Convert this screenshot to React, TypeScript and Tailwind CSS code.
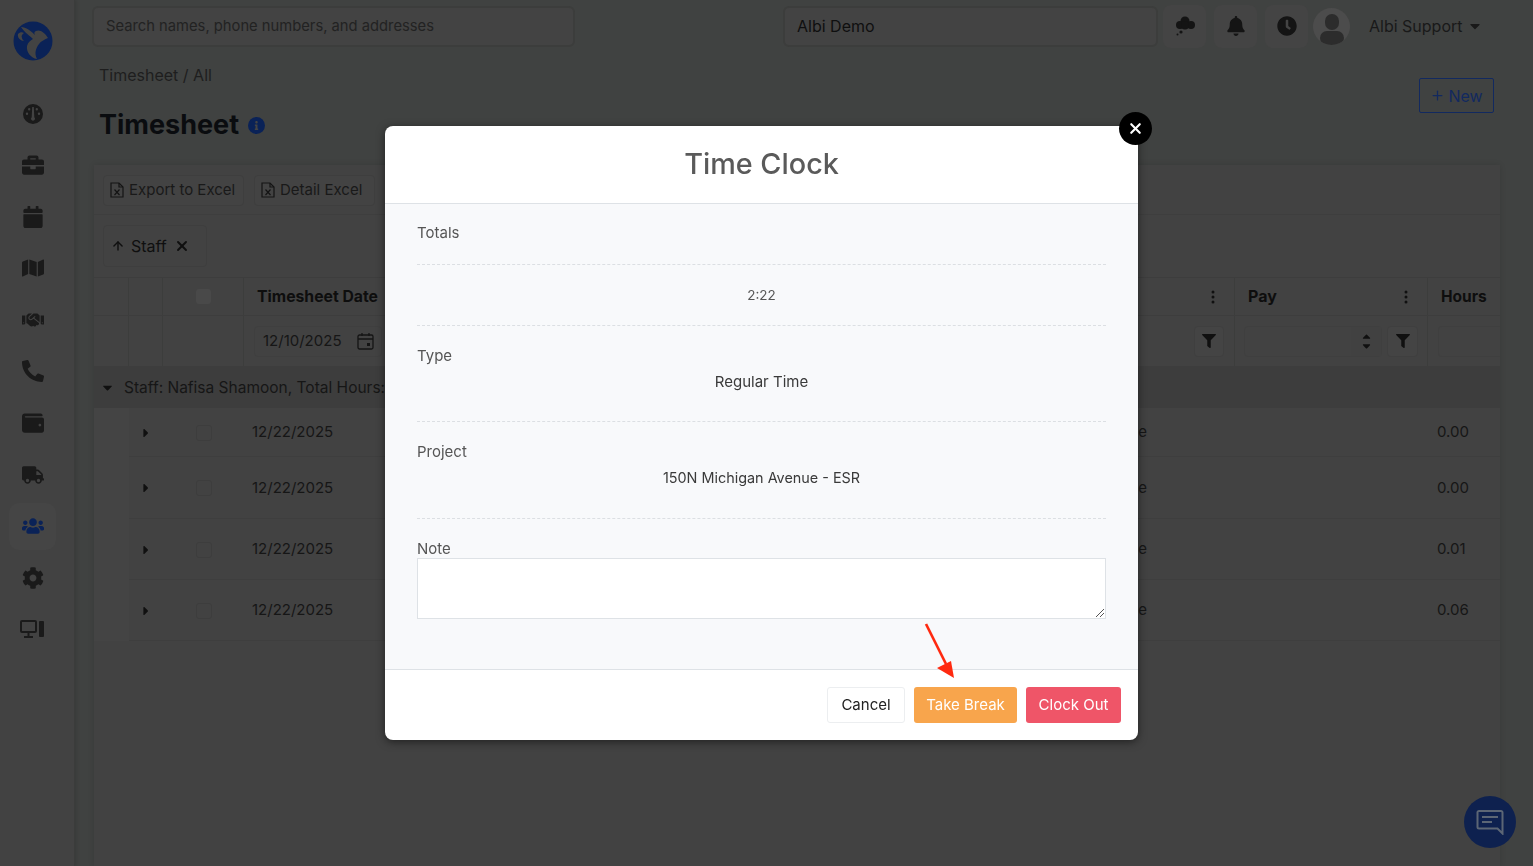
import React from 'react';
import { FaBriefcase, FaCalendar, FaMap, FaHandshake, FaPhoneAlt, FaWallet, FaTruck, FaUsers, FaCog, FaBell, FaClock, FaFilter, FaCaretDown, FaCaretRight, FaSortUp, FaSortDown, FaInfo } from 'react-icons/fa';
import { X, Plus, ArrowUp } from 'lucide-react';

const GaugeIcon = ({ size }: { size: number }) => (
  <svg width={size} height={size} viewBox="0 0 22 22" fill="#1a1a1a">
    <path fillRule="evenodd" d="M11 1a10 10 0 1 0 0 20 10 10 0 0 0 0-20zM5 9.5a1.2 1.2 0 1 1 0 2.4 1.2 1.2 0 0 1 0-2.4zm12 0a1.2 1.2 0 1 1 0 2.4 1.2 1.2 0 0 1 0-2.4zM7.2 5a1.2 1.2 0 1 1 0 2.4 1.2 1.2 0 0 1 0-2.4zm7.6 0a1.2 1.2 0 1 1 0 2.4 1.2 1.2 0 0 1 0-2.4zM10.2 4h1.6l.5 10.2a2 2 0 1 1-2.6 0z" />
  </svg>
);

const navIcons = [GaugeIcon, FaBriefcase, FaCalendar, FaMap, FaHandshake, FaPhoneAlt, FaWallet, FaTruck, FaUsers, FaCog];

const rows = [
  { hours: '0.00', height: 'h-[49px]' },
  { hours: '0.00', height: 'h-[62px]' },
  { hours: '0.01', height: 'h-[61px]' },
  { hours: '0.06', height: 'h-[61px]' },
];

const ExcelIcon = () => (
  <svg width="14" height="16" viewBox="0 0 14 16" fill="none" stroke="#141414" strokeWidth="1.2" className="shrink-0">
    <path d="M1 1h8l4 4v10H1z" />
    <path d="M9 1v4h4" />
    <path d="M4.5 7.5l5 5.5M9.5 7.5l-5 5.5" />
  </svg>
);

const CalendarIcon = () => (
  <svg width="17" height="18" viewBox="0 0 17 18" fill="none" stroke="#141414" strokeWidth="1.3">
    <rect x="1" y="3" width="15" height="14" rx="1.5" />
    <path d="M1 7h15M5 1v3M12 1v3" />
    <rect x="10" y="11" width="3" height="3" fill="#141414" stroke="none" />
  </svg>
);

const Kebab = () => (
  <svg width="4" height="14" viewBox="0 0 4 14" fill="#101010">
    <circle cx="2" cy="2" r="1.5" />
    <circle cx="2" cy="7" r="1.5" />
    <circle cx="2" cy="12" r="1.5" />
  </svg>
);

const Logo = () => (
  <svg width="40" height="40" viewBox="0 0 40 40">
    <circle cx="20" cy="20" r="19.5" fill="#0a2257" />
    <path d="M23 10C27 8 32 12 35 17 31 19 28 20 26 23 23 27 21 32 24 38 18 37 13 31 14 25 15 21 18 19 20 18 17 15 11 11 8 6 13 6 18 10 22 14 21 12 21 11 23 10z" fill="#434343" />
    <path d="M5 13c2-2 4-2 6-1-2 1-3 3-2 5 0 1 1 2 2 3-3 0-7-3-6-7z" fill="#434343" />
  </svg>
);

const ThoughtIcon = () => (
  <svg width="22" height="22" viewBox="0 0 22 22" fill="#141414">
    <circle cx="11" cy="6" r="4.5" />
    <circle cx="6" cy="10" r="4" />
    <circle cx="17" cy="10" r="4" />
    <circle cx="11" cy="10.5" r="4" />
    <circle cx="7" cy="17" r="1.6" />
    <circle cx="3.5" cy="19.5" r="1" />
  </svg>
);

const Sidebar = () => (
  <aside className="w-[75px] shrink-0 bg-[#424242] border-r border-[#3b3c3b] shadow-[1px_0_4px_rgba(0,0,0,0.15)] pl-[9px]">
    <div className="ml-[4px] mt-[21px] mb-[29px] h-[40px]">
      <Logo />
    </div>
    <nav className="flex flex-col gap-[4.6px]">
      {navIcons.map((Icon, i) => (
        <div
          key={i}
          className={`w-[47px] h-[47px] rounded-[10px] flex items-center justify-center ${i === 8 ? 'bg-[#454545] text-[#0a2257]' : 'text-[#1a1a1a]'}`}
        >
          <Icon size={22} />
        </div>
      ))}
      <div className="w-[47px] h-[47px] flex items-center justify-center">
        <svg width="25" height="19" viewBox="0 0 25 19" fill="none" stroke="#1a1a1a" strokeWidth="2">
          <rect x="1" y="1" width="15" height="11" rx="1" />
          <path d="M8.5 12v4M4 17h9" />
          <rect x="19" y="1" width="5" height="16" rx="1" fill="#1a1a1a" stroke="none" />
        </svg>
      </div>
    </nav>
  </aside>
);

const TopBar = () => (
  <header className="h-[52px] flex items-center">
    <div className="w-[483px] h-[41px] ml-[17px] rounded-[6px] border-2 border-[#3c3d3c] bg-[#434343] flex items-center px-[12px] text-[14.75px] text-[#222222]">
      Search names, phone numbers, and addresses
    </div>
    <div className="w-[375px] h-[41px] ml-[208px] rounded-[6px] border-2 border-[#3c3d3c] bg-[#434343] flex items-center px-[12px] text-[16px] text-[#0f0f0f]">
      Albi Demo
    </div>
    <div className="flex items-center gap-[8px] ml-[5px]">
      <div className="w-[43px] h-[43px] rounded-[8px] bg-[#444444] flex items-center justify-center"><ThoughtIcon /></div>
      <div className="w-[43px] h-[43px] rounded-[8px] bg-[#444444] flex items-center justify-center text-[#141414]"><FaBell size={20} /></div>
      <div className="w-[43px] h-[43px] rounded-[8px] bg-[#444444] flex items-center justify-center text-[#141414]"><FaClock size={20} /></div>
    </div>
    <div className="w-[37px] h-[37px] ml-[5px] rounded-full bg-[#4c4c4c] overflow-hidden flex flex-col items-center">
      <span className="w-[14px] h-[16px] mt-[6px] rounded-full bg-[#2c2c2c]" />
      <span className="w-[24px] h-[14px] mt-[1px] rounded-full bg-[#2c2c2c]" />
    </div>
    <span className="ml-[19px] text-[16px] text-[#191919]">Albi Support</span>
    <FaCaretDown size={16} className="ml-[4px] text-[#191919]" />
  </header>
);

const Th = ({ className = '', children }: { className?: string; children?: React.ReactNode }) => (
  <div className={`border-r border-[#3c3d3c] flex items-center ${className}`}>{children}</div>
);

const DataTable = () => (
  <div className="text-[#161616]">
    <div className="flex h-[39px] border-y border-[#3d3d3d]">
      <Th className="w-[35px]" />
      <Th className="w-[34px]" />
      <Th className="w-[81px] justify-center">
        <span className="w-[15px] h-[15px] rounded-[3px] bg-[#494949]" />
      </Th>
      <Th className="flex-1 pl-[13px] pr-[19px] justify-between">
        <span className="text-[15.75px] font-bold text-[#0e0e0e]">Timesheet Date</span>
        <Kebab />
      </Th>
      <Th className="w-[193px] pl-[13px] pr-[19px] justify-between">
        <span className="text-[16px] font-bold text-[#0e0e0e] -mt-[2px]">Pay</span>
        <Kebab />
      </Th>
      <Th className="w-[72px] pl-[13px] border-r-0">
        <span className="text-[15.5px] font-bold text-[#0e0e0e]">Hours</span>
      </Th>
    </div>
    <div className="flex h-[51px] border-b border-[#3d3d3d]">
      <Th className="w-[35px]" />
      <Th className="w-[34px]" />
      <Th className="w-[81px]" />
      <Th className="flex-1 pl-[10px] pr-[10px] justify-between">
        <div className="flex items-center h-[31px] w-[128px] rounded-[4px] border border-[#3f3f3f] pl-[8px] text-[15px]">
          12/10/2025
          <span className="ml-auto mr-[7px]"><CalendarIcon /></span>
        </div>
        <div className="w-[30px] h-[31px] rounded-[4px] bg-[#444444] border border-[#3f3f3f] flex items-center justify-center text-[#101010]">
          <FaFilter size={14} />
        </div>
      </Th>
      <Th className="w-[193px] pl-[9px] pr-[9px] gap-[5px]">
        <div className="flex-1 h-[31px] rounded-[4px] border border-[#3f3f3f] flex justify-end">
          <span className="w-[30px] h-full flex flex-col items-center justify-center bg-[#414141] text-[#101010]">
            <FaSortUp size={13} className="-mb-[8px]" />
            <FaSortDown size={13} className="-mt-[1px]" />
          </span>
        </div>
        <div className="w-[31px] h-[31px] rounded-[4px] bg-[#444444] border border-[#3f3f3f] flex items-center justify-center text-[#101010]">
          <FaFilter size={14} />
        </div>
      </Th>
      <Th className="w-[72px] pl-[10px] border-r-0">
        <div className="flex-1 h-[31px] rounded-l-[4px] border-y border-l border-[#3f3f3f]" />
      </Th>
    </div>
    <div className="h-[41px] bg-[#3d3d3d] flex items-center text-[15.5px] pl-[6px]">
      <FaCaretDown size={15} className="text-[#101010]" />
      <span className="ml-[9px] whitespace-nowrap">Staff: Nafisa Shamoon, Total Hours: 2:22</span>
    </div>
    <div className="flex">
      <div className="w-[35px] shrink-0 bg-[#444444]" />
      <div className="flex-1">
        {rows.map((row, i) => (
          <div key={i} className={`flex items-center ${row.height} pt-[1px] bg-[#424242] border-b border-[#3e3e3e] text-[15px]`}>
            <div className="w-[34px] flex justify-center text-[#101010]"><FaCaretRight size={14} /></div>
            <div className="w-[81px] flex justify-center">
              <span className="w-[16px] h-[16px] rounded-[3px] border border-[#3d3d3d]" />
            </div>
            <div className="flex-1 pl-[8px]">12/22/2025</div>
            <div className="whitespace-nowrap">Regular Time</div>
            <div className="w-[88px]" />
            <div className="w-[193px]" />
            <div className="w-[72px] pl-[9px]">{row.hours}</div>
          </div>
        ))}
      </div>
    </div>
  </div>
);

const FormValue = ({ children, className = '' }: { children: React.ReactNode; className?: string }) => (
  <div className={`text-center text-[15px] text-[#3a3a3a] ${className}`}>{children}</div>
);

const TimeClockModal = () => (
  <div className="fixed inset-0 z-10 flex justify-center pt-[126px] pr-[10px]">
    <div className="relative w-[753px] h-[614px] rounded-[8px] bg-white shadow-[0_2px_8px_rgba(0,0,0,0.5)] flex flex-col">
      <button className="absolute -right-[14px] -top-[14px] w-[33px] h-[33px] rounded-full bg-black flex items-center justify-center">
        <X size={17} strokeWidth={3} className="text-white" />
      </button>
      <div className="h-[78px] shrink-0 pb-[2px] border-b border-[#dee2e6] flex items-center justify-center rounded-t-[8px]">
        <h2 className="text-[28.8px] font-medium text-[#5a5a5a]">Time Clock</h2>
      </div>
      <div className="flex-1 bg-[#f8f9fb] px-[32px]">
        <div className="h-[61px] pt-[18px] border-b border-dashed border-[#dcdfe3] text-[15px] text-[#555555]">Totals</div>
        <div className="h-[61px] flex items-center justify-center border-b border-dashed border-[#dcdfe3]">
          <FormValue className="!text-[#555555] !text-[13.5px]">2:22</FormValue>
        </div>
        <div className="h-[96px] pt-[19px] border-b border-dashed border-[#dcdfe3] text-[15px] text-[#555555]">
          Type
          <FormValue className="mt-[3px]">Regular Time</FormValue>
        </div>
        <div className="h-[97px] pt-[19px] border-b border-dashed border-[#dcdfe3] text-[15px] text-[#555555]">
          Project
          <FormValue className="mt-[3px] !text-[14.4px]">150N Michigan Avenue - ESR</FormValue>
        </div>
        <div className="pt-[19px] text-[15px] text-[#555555] leading-[22px]">
          Note
          <div className="relative h-[61px] -mt-[2px] border border-[#dee2e6] bg-white">
            <svg width="9" height="9" viewBox="0 0 9 9" stroke="#555" strokeWidth="1" className="absolute right-[1px] bottom-[1px]">
              <path d="M1 9l8-8M5 9l4-4" />
            </svg>
          </div>
        </div>
      </div>
      <div className="h-[71px] shrink-0 border-t border-[#dee2e6] flex items-center justify-end gap-[9px] pr-[17px] rounded-b-[8px]">
        <button className="w-[78px] h-[36px] rounded-[3px] border border-[#eceef0] text-[15px] text-[#222222]">Cancel</button>
        <button className="w-[103px] h-[36px] rounded-[3px] bg-[#f8a54c] text-[15px] text-white">Take Break</button>
        <button className="w-[95px] h-[36px] rounded-[3px] bg-[#ef5568] text-[15px] text-white">Clock Out</button>
      </div>
      <svg width="40" height="62" viewBox="0 0 40 62" className="absolute left-[536px] top-[494px]">
        <path d="M5 4l20 40" stroke="#ff2a10" strokeWidth="2.6" fill="none" />
        <path d="M33 58l-17-10 14-7z" fill="#ff2a10" />
      </svg>
    </div>
  </div>
);

export default function App() {
  return (
    <div className="relative h-[866px] overflow-hidden flex bg-[#404241] font-['Inter','Liberation_Sans',sans-serif] text-[#161616]">
      <Sidebar />
      <main className="flex-1 min-w-0">
        <TopBar />
        <div className="flex justify-between pl-[24px] pr-[39px] h-[113px]">
          <div>
            <div className="text-[16px] text-[#1e1e1e] mt-[11px]">Timesheet / All</div>
            <div className="flex items-center mt-[18px]">
              <h1 className="text-[27px] font-bold text-[#0a0c0f]">Timesheet</h1>
              <span className="ml-[9px] w-[17px] h-[17px] rounded-full bg-[#0a2257] flex items-center justify-center text-[#444]"><FaInfo size={9} /></span>
            </div>
          </div>
          <button className="mt-[26px] w-[75px] h-[35px] rounded-[2px] border border-[#12295f] text-[#12295f] text-[16px] flex items-center justify-center gap-[3px]">
            <Plus size={15} /> New
          </button>
        </div>
        <section className="ml-[19px] mr-[33px] h-[701px] bg-[#424242] shadow-[0_0_6px_rgba(0,0,0,0.12)]">
          <div className="h-[50px] pt-[1px] flex items-center gap-[10px] pl-[9px] border-b border-[#3e3e3e]">
            <button className="w-[141px] h-[31px] rounded-[4px] border border-[#3e3e3e] bg-[#434343] flex items-center pl-[6px] gap-[5px] text-[15px] text-[#191919]">
              <ExcelIcon /> Export to Excel
            </button>
            <button className="w-[121px] h-[31px] rounded-[4px] border border-[#3e3e3e] bg-[#434343] flex items-center pl-[6px] gap-[5px] text-[15px] text-[#191919]">
              <ExcelIcon /> Detail Excel
            </button>
          </div>
          <div className="h-[62px] flex items-center pl-[9px]">
            <div className="w-[104px] h-[42px] rounded-[4px] border border-[#3e3e3e] flex items-center pl-[7px] text-[16px] text-[#0f0f0f]">
              <ArrowUp size={14} strokeWidth={2.4} />
              <span className="ml-[6px]">Staff</span>
              <X size={16} strokeWidth={2.8} className="ml-[7px]" />
            </div>
          </div>
          <DataTable />
        </section>
      </main>
      <div className="absolute right-[17px] bottom-[18px] w-[52px] h-[52px] rounded-full bg-[#0e214f] flex items-center justify-center">
        <svg width="28" height="26" viewBox="0 0 28 26" fill="none" stroke="#5c6675" strokeWidth="2">
          <path d="M3 2h22a1.5 1.5 0 0 1 1.5 1.5v21l-5-5H3a1.5 1.5 0 0 1-1.5-1.5v-15A1.5 1.5 0 0 1 3 2z" />
          <path d="M6 8h16M6 13h10" />
        </svg>
      </div>
      <TimeClockModal />
    </div>
  );
}
